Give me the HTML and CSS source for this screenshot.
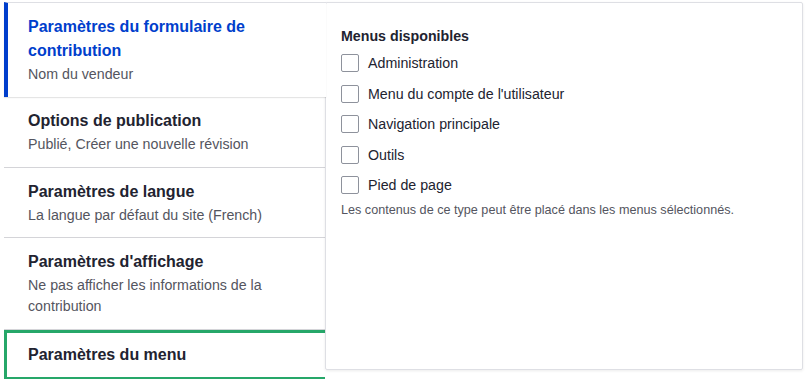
FILE: index.html
```html
<!DOCTYPE html>
<html lang="fr">
<head>
    <meta charset="UTF-8">
    <meta name="viewport" content="width=device-width, initial-scale=1.0">
    <title>Paramètres du menu</title>
    <link rel="stylesheet" href="styles.css">
</head>
<body>
    <div class="vtabs">
        <ul class="vtabs-menu">
            <li class="vtabs-item is-selected">
                <span class="vtabs-title">Paramètres du formulaire de contribution</span>
                <span class="vtabs-summary">Nom du vendeur</span>
            </li>
            <li class="vtabs-item">
                <span class="vtabs-title">Options de publication</span>
                <span class="vtabs-summary">Publié, Créer une nouvelle révision</span>
            </li>
            <li class="vtabs-item">
                <span class="vtabs-title">Paramètres de langue</span>
                <span class="vtabs-summary">La langue par défaut du site (French)</span>
            </li>
            <li class="vtabs-item">
                <span class="vtabs-title">Paramètres d'affichage</span>
                <span class="vtabs-summary">Ne pas afficher les informations de la contribution</span>
            </li>
            <li class="vtabs-item is-focused">
                <span class="vtabs-title">Paramètres du menu</span>
            </li>
        </ul>

        <div class="vtabs-pane">
            <h4 class="pane-label">Menus disponibles</h4>
            <div class="check-row"><span class="check-box"></span><label>Administration</label></div>
            <div class="check-row"><span class="check-box"></span><label>Menu du compte de l'utilisateur</label></div>
            <div class="check-row"><span class="check-box"></span><label>Navigation principale</label></div>
            <div class="check-row"><span class="check-box"></span><label>Outils</label></div>
            <div class="check-row"><span class="check-box"></span><label>Pied de page</label></div>
            <p class="pane-desc">Les contenus de ce type peut être placé dans les menus sélectionnés.</p>
        </div>
    </div>
</body>
</html>
```

FILE: styles.css
```css
body {
    font-family: 'Liberation Sans', Arial, sans-serif;
    background-color: #fff;
    color: #222330;
    margin: 0;
    padding: 2px 5px 0 4px;
}
.vtabs {
    display: flex;
    align-items: flex-start;
}
.vtabs-menu {
    list-style: none;
    margin: 0;
    padding: 0;
    width: 321px;
    flex: none;
}
.vtabs-item {
    display: block;
    padding: 12px 16px 11px 24px;
    border-bottom: 1px solid #d4d4d8;
}
.vtabs-title {
    display: block;
    font-size: 16px;
    line-height: 24px;
    font-weight: bold;
    color: #222330;
}
.vtabs-summary {
    display: block;
    margin-top: 1px;
    font-size: 14.22px;
    line-height: 21.33px;
    color: #545560;
}
.is-selected {
    position: relative;
    z-index: 1;
    margin-right: -1px;
    padding: 12px 16px 12px 20px;
    background: #fff;
    border-top: 1px solid #dedfe4;
    border-left: 4px solid #003ecc;
    border-bottom: 0;
    box-shadow: 0 1px 1px rgba(0, 0, 0, 0.1);
}
.is-selected .vtabs-title {
    color: #003ecc;
}
.is-focused {
    padding: 10px 16px 10px 21px;
    border: 3px solid #26a769;
    border-right: 0;
}
.vtabs-pane {
    flex: 1;
    height: 368px;
    box-sizing: border-box;
    padding: 24px 15px;
    border: 1px solid #dedfe4;
    border-radius: 2px;
    box-shadow: 0 1px 3px rgba(0, 0, 0, 0.08);
}
.pane-label {
    margin: 0 0 3px;
    font-size: 14.22px;
    line-height: 18px;
    font-weight: bold;
    color: #222330;
}
.check-row {
    display: flex;
    align-items: center;
    height: 30.5px;
    font-size: 14.22px;
    color: #222330;
}
.check-box {
    width: 18px;
    height: 18px;
    box-sizing: border-box;
    border: 1px solid #8e929c;
    border-radius: 2px;
    margin-right: 9px;
}
.pane-desc {
    margin: 0;
    font-size: 12.64px;
    line-height: 18px;
    color: #545560;
}
```
